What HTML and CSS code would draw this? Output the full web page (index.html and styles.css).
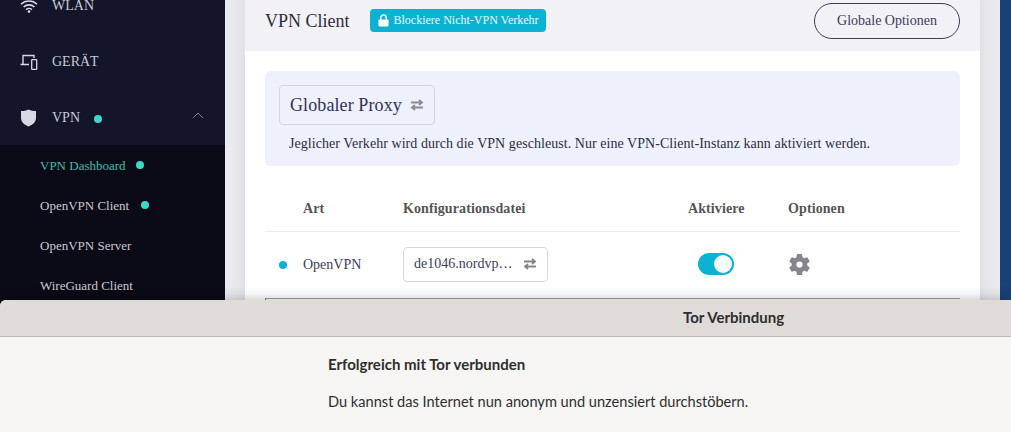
FILE: index.html
```html
<!DOCTYPE html>
<html lang="de">
<head>
<meta charset="utf-8">
<title>VPN Client</title>
<link rel="stylesheet" href="styles.css">
</head>
<body>
<div class="app">
  <nav class="sidebar">
    <div class="nav-item">
      <svg class="nav-icon" viewBox="0 0 18 14" width="18" height="14"><path d="M1 5.200a11.500 11.500 0 0 1 16 0M3.600 8a7.800 7.800 0 0 1 10.800 0M6.200 10.600a4 4 0 0 1 5.600 0" fill="none" stroke="#d6d8e6" stroke-width="1.600"/><circle cx="9" cy="12.600" r="1.300" fill="#d6d8e6"/></svg>
      <span>WLAN</span>
    </div>
    <div class="nav-item">
      <svg class="nav-icon" viewBox="0 0 18 16" width="18" height="16"><path d="M3 10V1.500h11V4M0.500 10.500H9" fill="none" stroke="#d6d8e6" stroke-width="1.400"/><rect x="11.700" y="5.700" width="5" height="9.600" rx=".6" fill="none" stroke="#d6d8e6" stroke-width="1.300"/></svg>
      <span>GERÄT</span>
    </div>
    <div class="nav-item">
      <svg class="nav-icon" viewBox="0 0 18 18" width="18" height="18"><path d="M8.500.5c2.300 1 4.600 1.500 7.500 1.500v7c0 4-3.500 6.900-7.500 8.500C4.500 15.900 1 13 1 9V2C3.900 2 6.200 1.500 8.500.5z" fill="#d6d8e6"/></svg>
      <span>VPN</span>
      <i class="dot dot-nav"></i>
      <svg class="chevron" viewBox="0 0 12 7" width="12" height="7"><path d="M1 6l5-5 5 5" fill="none" stroke="#7c7e8e" stroke-width="1"/></svg>
    </div>
    <div class="submenu">
      <div class="sub-item active"><span>VPN Dashboard</span><i class="dot"></i></div>
      <div class="sub-item"><span>OpenVPN Client</span><i class="dot"></i></div>
      <div class="sub-item"><span>OpenVPN Server</span></div>
      <div class="sub-item"><span>WireGuard Client</span></div>
    </div>
  </nav>
  <main class="content">
    <section class="card">
      <header class="card-head">
        <h1>VPN Client</h1>
        <span class="badge">
          <svg viewBox="0 0 12 14" width="11" height="13"><path d="M3 6V4a3 3 0 0 1 6 0v2" fill="none" stroke="#fff" stroke-width="1.700"/><rect x=".5" y="5.800" width="11" height="7.700" rx="1.200" fill="#fff"/></svg>
          Blockiere Nicht-VPN Verkehr
        </span>
        <button class="outline-btn">Globale Optionen</button>
      </header>
      <div class="card-body">
        <div class="proxy-box">
          <div class="proxy-select">
            <span>Globaler Proxy</span>
            <svg viewBox="0 0 14 12" width="14" height="12"><path d="M1 3.500h11M9 1l3 2.500L9 6M13 8.500H2M5 6l-3 2.500L5 11" fill="none" stroke="#8c8c94" stroke-width="1.800"/></svg>
          </div>
          <p>Jeglicher Verkehr wird durch die VPN geschleust. Nur eine VPN-Client-Instanz kann aktiviert werden.</p>
        </div>
        <div class="table">
          <div class="row head">
            <div class="c-status"></div>
            <div class="c-art">Art</div>
            <div class="c-file">Konfigurationsdatei</div>
            <div class="c-on">Aktiviere</div>
            <div class="c-opt">Optionen</div>
          </div>
          <div class="row">
            <div class="c-status"><i class="status"></i></div>
            <div class="c-art type">OpenVPN</div>
            <div class="c-file">
              <div class="file-select">
                <span>de1046.nordvp…</span>
                <svg viewBox="0 0 14 12" width="14" height="12"><path d="M1 3.500h11M9 1l3 2.500L9 6M13 8.500H2M5 6l-3 2.500L5 11" fill="none" stroke="#85858c" stroke-width="1.800"/></svg>
              </div>
            </div>
            <div class="c-on"><span class="toggle"><i></i></span></div>
            <div class="c-opt">
              <svg viewBox="0 0 24 24" width="25" height="25"><path fill="#85858c" fill-rule="evenodd" d="M19.400 13c.04-.32.06-.66.06-1s-.02-.68-.07-1l2.100-1.650a.5.5 0 0 0 .12-.64l-2-3.460a.5.5 0 0 0-.6-.22l-2.500 1a7.300 7.300 0 0 0-1.700-1l-.37-2.650A.5.5 0 0 0 14 2h-4a.5.5 0 0 0-.5.420l-.37 2.650a7.600 7.600 0 0 0-1.700 1l-2.480-1a.5.5 0 0 0-.61.220l-2 3.460a.5.5 0 0 0 .12.640L4.570 11c-.05.32-.07.67-.07 1s.02.680.07 1l-2.110 1.650a.5.500 0 0 0-.12.640l2 3.460c.12.22.39.300.61.220l2.490-1c.52.400 1.070.730 1.690 1l.37 2.650c.05.240.25.420.5.420h4c.250 0 .46-.180.49-.420l.37-2.650a7.300 7.300 0 0 0 1.700-1l2.490 1c.22.080.49 0 .61-.220l2-3.460a.5.5 0 0 0-.12-.640zM12 15a3 3 0 1 1 0-6 3 3 0 0 1 0 6z"/></svg>
            </div>
          </div>
          <div class="row next"></div>
        </div>
      </div>
    </section>
  </main>
  <div class="page-edge"></div>
</div>
<div class="dialog">
  <div class="dialog-title">Tor Verbindung</div>
  <div class="dialog-body">
    <h2>Erfolgreich mit Tor verbunden</h2>
    <p>Du kannst das Internet nun anonym und unzensiert durchstöbern.</p>
  </div>
</div>
</body>
</html>
```
FILE: styles.css
```css
* { box-sizing: border-box; }
html, body { margin: 0; height: 100%; overflow: hidden; }
body { font-family: "Liberation Serif", serif; background: #ececf0; }
.app { display: flex; height: 432px; overflow: hidden; }
.sidebar { width: 225px; flex: none; background: #13152a; margin-top: -23px; color: #c9cad4; font-size: 14px; }
.nav-item { height: 56px; display: flex; align-items: center; padding: 2px 0 0 20px; }
.nav-icon { margin-right: 14px; flex: none; }
.chevron { margin-left: auto; margin-right: 21px; margin-top: -5px; }
.dot { width: 8px; height: 8px; border-radius: 50%; background: #3fd8c8; display: block; margin-left: 12px; margin-top: -2px; }
.sub-item.active .dot { margin-left: 10px; }
.dot-nav { margin-left: 14px; margin-top: 2px; }
.submenu { background: #0a0b16; padding-bottom: 200px; }
.sub-item { height: 40px; display: flex; align-items: center; padding: 2px 0 0 40px; font-size: 13px; }
.sub-item.active { color: #3fbcae; }
.content { flex: none; width: 775px; padding: 0 20px; margin-top: -10px; }
.card { background: #fff; height: 500px; box-shadow: 0 0 20px rgba(0,0,0,.09); }
.page-edge { flex: 1; background: #1a4175; position: relative; }
.card-head { height: 61px; padding: 0 20px; background: #f1f1f6; display: flex; align-items: center; }
h1 { font-size: 18px; font-weight: 400; margin: 2px 20px 0 0; color: #2c2d44; }
.badge { height: 23px; display: inline-flex; align-items: center; gap: 5px; padding: 0 7px 0 8px; background: #0cb2d2; color: #e8f8fb; border-radius: 4px; font-size: 12px; }
.outline-btn { margin-left: auto; width: 146px; height: 36px; border-radius: 18px; border: 1px solid #3c3d5c; background: none; font: 14px "Liberation Serif", serif; color: #3c3d5c; padding: 0; }
.card-body { padding: 20px 20px 0; }
.proxy-box { height: 95px; background: #eef1fb; border-radius: 6px; padding: 14px 14px 0; }
.proxy-select { width: 156px; height: 40px; border: 1px solid #d3d5e2; border-radius: 4px; display: flex; align-items: center; justify-content: space-between; padding: 0 10px; font-size: 18px; letter-spacing: .1px; color: #2f3356; }
.proxy-box p { margin: 11px 0 0 10px; font-size: 14px; letter-spacing: .05px; color: #2c2d44; }
.table { margin-top: 21px; }
.row { display: flex; align-items: center; height: 66px; padding-bottom: 2px; font-size: 14px; color: #3c3d5c; }
.row.head { height: 45px; padding-bottom: 0; font-weight: 700; color: #555; border-bottom: 1px solid #ececf0; letter-spacing: .1px; }
.c-status { width: 38px; padding-left: 14px; display: flex; }
.c-art { width: 100px; }
.c-art.type { margin-top: 2px; }
.c-file { width: 285px; }
.c-on { width: 100px; }
.c-opt { flex: 1; }
.status { width: 8px; height: 8px; border-radius: 50%; background: #0cb2d2; display: block; margin-top: 2px; }
.file-select { width: 145px; height: 35px; border: 1px solid #d8d8de; border-radius: 4px; display: flex; align-items: center; justify-content: space-between; padding: 0 10px; }
.toggle { display: block; width: 36px; height: 22px; margin-left: 10px; border-radius: 11px; background: #0cb2d2; position: relative; }
.toggle i { position: absolute; right: 2px; top: 2px; width: 18px; height: 18px; border-radius: 50%; background: #f4fbfd; }
.c-opt svg { display: block; margin-left: -1.5px; }
.row.next { border-top: 1px solid #9a9ea4; height: 40px; border-left: 1px solid #1a9a9a; }
.dialog { position: absolute; left: 0; right: 0; top: 300px; height: 132px; border-radius: 6px 0 0 0; background: #f6f5f4; box-shadow: 0 0 14px rgba(0,0,0,.28); font-family: Lato, "Noto Sans", sans-serif; color: #2e2e2e; overflow: hidden; }
.dialog-title { height: 37px; padding: 0 0 2px 683px; background: #dfdcd8; border-bottom: 1px solid #bdb9b5; font-size: 15px; font-weight: 700; display: flex; align-items: center; }
.dialog-body { padding-left: 328px; }
.dialog-body h2 { margin: 17px 0 0; font-size: 15px; line-height: 20px; font-weight: 700; }
.dialog-body p { margin: 18px 0 0; font-size: 14.6px; line-height: 20px; }
```
